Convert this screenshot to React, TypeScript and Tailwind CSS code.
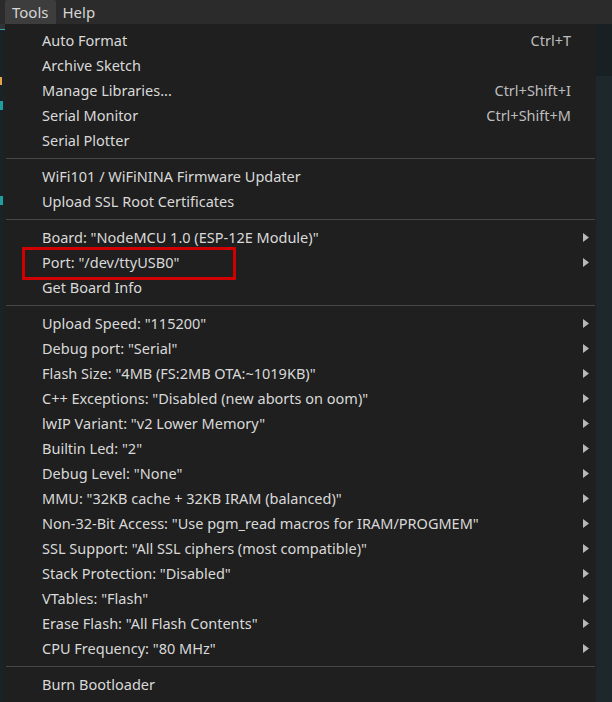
import React from 'react';

type Item = { label: string; shortcut?: string; sub?: boolean };

const groups: Item[][] = [
    [
        { label: 'Auto Format', shortcut: 'Ctrl+T' },
        { label: 'Archive Sketch' },
        { label: 'Manage Libraries...', shortcut: 'Ctrl+Shift+I' },
        { label: 'Serial Monitor', shortcut: 'Ctrl+Shift+M' },
        { label: 'Serial Plotter' },
    ],
    [
        { label: 'WiFi101 / WiFiNINA Firmware Updater' },
        { label: 'Upload SSL Root Certificates' },
    ],
    [
        { label: 'Board: "NodeMCU 1.0 (ESP-12E Module)"', sub: true },
        { label: 'Port: "/dev/ttyUSB0"', sub: true },
        { label: 'Get Board Info' },
    ],
    [
        { label: 'Upload Speed: "115200"', sub: true },
        { label: 'Debug port: "Serial"', sub: true },
        { label: 'Flash Size: "4MB (FS:2MB OTA:~1019KB)"', sub: true },
        { label: 'C++ Exceptions: "Disabled (new aborts on oom)"', sub: true },
        { label: 'lwIP Variant: "v2 Lower Memory"', sub: true },
        { label: 'Builtin Led: "2"', sub: true },
        { label: 'Debug Level: "None"', sub: true },
        { label: 'MMU: "32KB cache + 32KB IRAM (balanced)"', sub: true },
        { label: 'Non-32-Bit Access: "Use pgm_read macros for IRAM/PROGMEM"', sub: true },
        { label: 'SSL Support: "All SSL ciphers (most compatible)"', sub: true },
        { label: 'Stack Protection: "Disabled"', sub: true },
        { label: 'VTables: "Flash"', sub: true },
        { label: 'Erase Flash: "All Flash Contents"', sub: true },
        { label: 'CPU Frequency: "80 MHz"', sub: true },
    ],
    [{ label: 'Burn Bootloader' }],
];

function Arrow() {
    return (
        <svg width="6" height="9" viewBox="0 0 6 9" className="absolute right-[7px] top-[8px]">
            <path d="M0 0 L6 4.5 L0 9 Z" fill="#b8b8b8" />
        </svg>
    );
}

function MenuRow({ item }: { item: Item }) {
    return (
        <div className="relative flex items-center h-[25px] pl-[37px] pr-[25px] text-[#d9d9d9]">
            <span className="flex-1 whitespace-nowrap">{item.label}</span>
            {item.shortcut && <span className="text-[#bdbdbd] whitespace-nowrap">{item.shortcut}</span>}
            {item.sub && <Arrow />}
        </div>
    );
}

export default function App() {
    return (
        <div
            className="w-[612px] h-[702px] overflow-hidden bg-[#1c2327] flex flex-col text-[14.5px]"
            style={{ fontFamily: '"Noto Sans", "Open Sans", sans-serif' }}
        >
            {/* menubar */}
            <div className="h-[24px] bg-[#2b2b2b] flex items-stretch pl-[5px] text-[#d6d6d6] text-[15px]">
                <div className="bg-[#3d3d3d] px-[7px] flex items-center rounded-t-[2px]">Tools</div>
                <div className="px-[7px] flex items-center">Help</div>
            </div>

            <div className="flex flex-1 min-h-0">
                {/* editor behind, left edge */}
                <div className="w-[5px] bg-[#1b2226] relative overflow-hidden">
                    <div className="h-[5px] bg-[#303436]" />
                    <div className="h-[1px] bg-[#3aa6a6]" />
                    <div className="absolute top-[53px] left-0 w-[2px] h-[8px] bg-[#e5a445]" />
                    <div className="absolute top-[77px] left-0 w-[3px] h-[9px] bg-[#1f9e9e]" />
                    <div className="absolute top-[172px] left-0 w-[3px] h-[9px] bg-[#1f9e9e]" />
                </div>

                {/* dropdown */}
                <div className="relative w-[591px] bg-[#1f1f1f] pt-[4px]">
                    {groups.map((g, gi) => (
                        <div key={gi}>
                            {gi > 0 && <div className="h-[1px] bg-[#484848] my-[5px] mx-[1px]" />}
                            {g.map((item) => (
                                <MenuRow key={item.label} item={item} />
                            ))}
                        </div>
                    ))}
                    {/* highlight box */}
                    <div className="absolute left-[17px] top-[223px] w-[214px] h-[33px] border-[3px] border-[#d00000]" />
                </div>

                <div className="flex-1 flex flex-col">
                    <div className="h-[52px] bg-[#182024]" />
                    <div className="flex-1 bg-[#1e272b]" />
                </div>
            </div>
        </div>
    );
}
